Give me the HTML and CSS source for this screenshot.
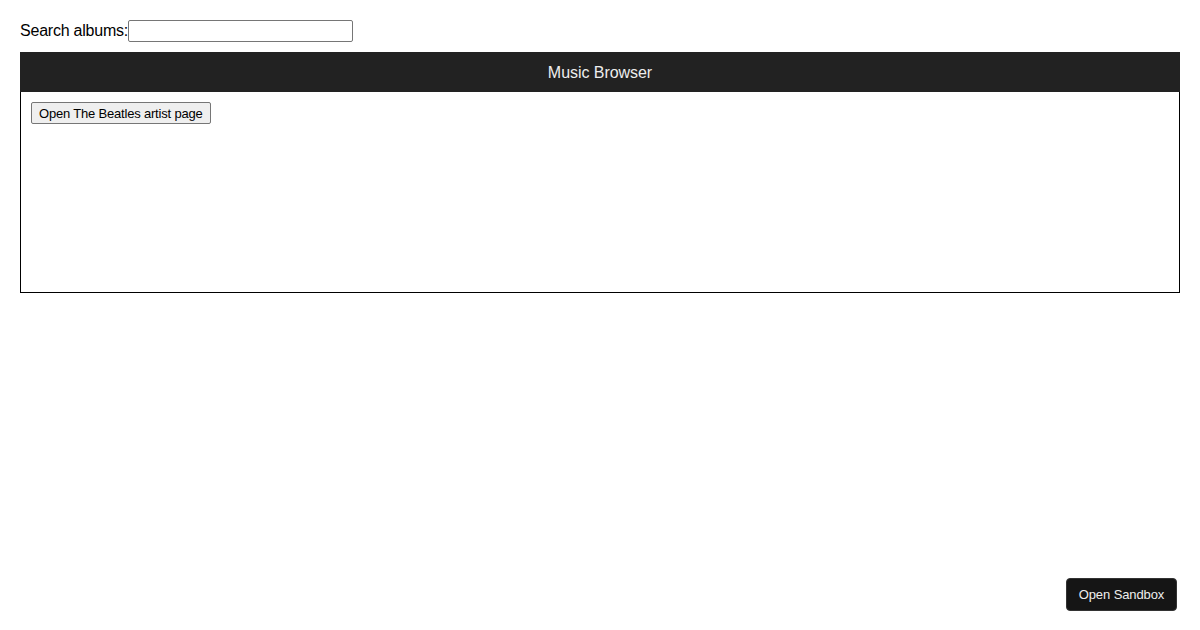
FILE: index.html
```html
<!DOCTYPE html>
<html>
<head>
<meta charset="utf-8">
<link rel="stylesheet" href="styles.css">
</head>
<body>
<div class="page">
  <div class="search">
    <label class="search-label" for="q">Search albums:</label><input id="q" class="search-input" type="text">
  </div>
  <div class="browser">
    <div class="browser-header">Music Browser</div>
    <div class="browser-body">
      <button class="artist-btn" type="button">Open The Beatles artist page</button>
    </div>
  </div>
</div>
<button class="sandbox-btn" type="button">Open Sandbox</button>
</body>
</html>
```
FILE: styles.css
```css
html, body {
  margin: 0;
  padding: 0;
  background: #fff;
}
body {
  font-family: "Liberation Sans", Arial, sans-serif;
  color: #000;
}
.page {
  padding: 20px;
}
.search {
  display: flex;
  align-items: center;
  height: 22px;
  margin-bottom: 10px;
}
.search-label {
  font-size: 16px;
  line-height: 18px;
  letter-spacing: -0.22px;
}
.search-input {
  box-sizing: border-box;
  width: 225px;
  height: 22px;
  margin: 0;
  padding: 1px 2px;
  border: 1px solid #767676;
  border-radius: 2px;
  font-family: "Liberation Sans", Arial, sans-serif;
  font-size: 13px;
}
.browser {
  border: 1px solid #000;
}
.browser-header {
  height: 39px;
  background: #222;
  color: #eee;
  font-size: 16px;
  letter-spacing: -0.05px;
  display: flex;
  align-items: center;
  justify-content: center;
  margin-top: -1px;
  margin-left: -1px;
  margin-right: -1px;
  padding-top: 1px;
}
.browser-body {
  box-sizing: border-box;
  height: 200px;
  padding: 10px;
}
.artist-btn {
  box-sizing: border-box;
  height: 22px;
  margin: 0;
  padding: 1px 7px;
  background: #efefef;
  border: 1px solid #767676;
  border-radius: 2px;
  font-family: "Liberation Sans", Arial, sans-serif;
  font-size: 13px;
  letter-spacing: -0.19px;
  color: #000;
}
.sandbox-btn {
  position: fixed;
  right: 23px;
  bottom: 19px;
  box-sizing: border-box;
  width: 111px;
  height: 33px;
  padding: 0;
  background: #151515;
  color: #eee;
  border: 1px solid #333;
  border-radius: 4px;
  font-family: "Liberation Sans", Arial, sans-serif;
  font-size: 13px;
  letter-spacing: -0.1px;
}
```
